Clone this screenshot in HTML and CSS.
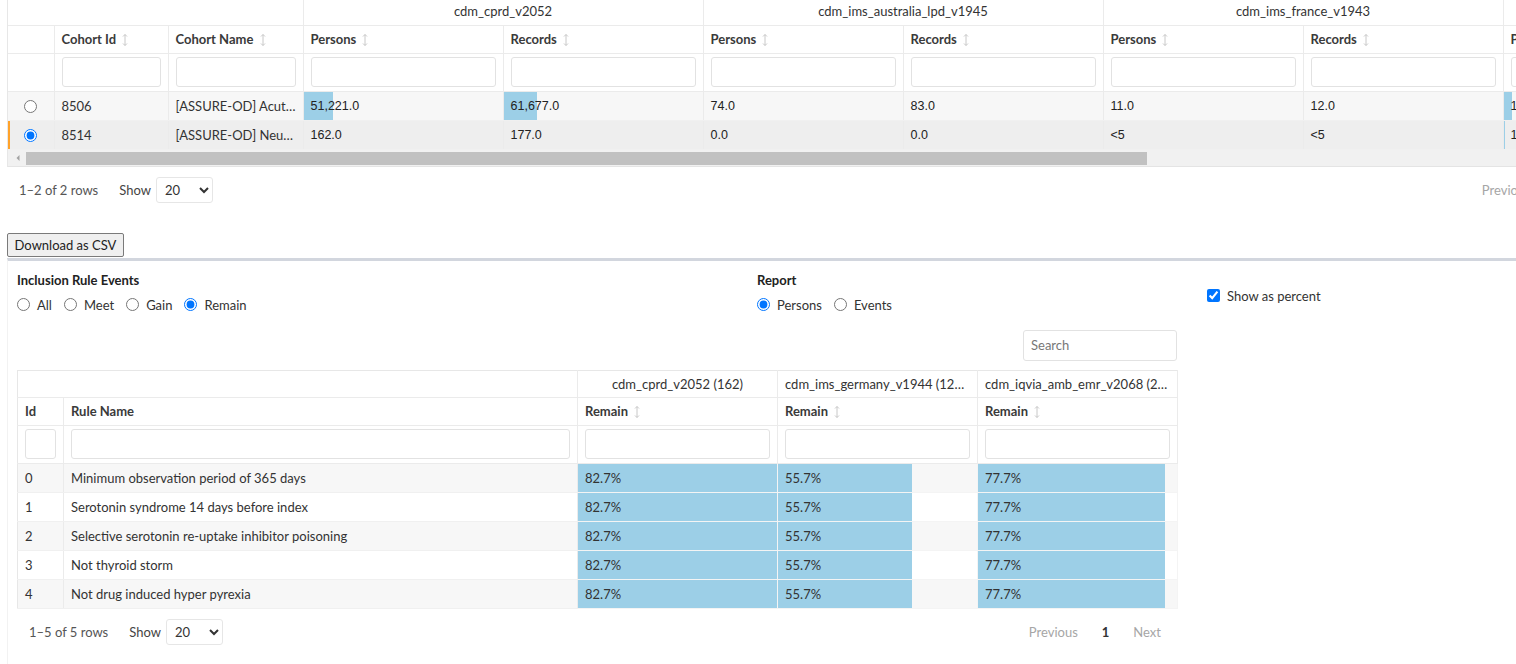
FILE: index.html
```html
<!DOCTYPE html>
<html>
<head>
<meta charset="utf-8">
<link rel="stylesheet" href="styles.css">
</head>
<body>
<div class="page">
  <div class="grid-wrap">
    <div class="grid-box">
      <div class="grid-scroll">
        <table class="grid top">
          <colgroup>
            <col class="c-sel"><col class="c-id"><col class="c-name">
            <col class="c-num"><col class="c-num"><col class="c-num"><col class="c-num">
            <col class="c-num"><col class="c-num"><col class="c-num"><col class="c-num">
          </colgroup>
          <thead>
            <tr class="grp">
              <th colspan="3"></th>
              <th colspan="2">cdm_cprd_v2052</th>
              <th colspan="2">cdm_ims_australia_lpd_v1945</th>
              <th colspan="2">cdm_ims_france_v1943</th>
              <th colspan="2">cdm_ims_germany_v1944</th>
            </tr>
            <tr class="hdr">
              <th></th>
              <th>Cohort Id <svg class="sort" viewBox="0 0 8 14" width="8" height="14"><path d="M4 1.5v11M2 3.5L4 1.5L6 3.5M2 10.5L4 12.5L6 10.5"/></svg></th>
              <th>Cohort Name <svg class="sort" viewBox="0 0 8 14" width="8" height="14"><path d="M4 1.5v11M2 3.5L4 1.5L6 3.5M2 10.5L4 12.5L6 10.5"/></svg></th>
              <th>Persons <svg class="sort" viewBox="0 0 8 14" width="8" height="14"><path d="M4 1.5v11M2 3.5L4 1.5L6 3.5M2 10.5L4 12.5L6 10.5"/></svg></th>
              <th>Records <svg class="sort" viewBox="0 0 8 14" width="8" height="14"><path d="M4 1.5v11M2 3.5L4 1.5L6 3.5M2 10.5L4 12.5L6 10.5"/></svg></th>
              <th>Persons <svg class="sort" viewBox="0 0 8 14" width="8" height="14"><path d="M4 1.5v11M2 3.5L4 1.5L6 3.5M2 10.5L4 12.5L6 10.5"/></svg></th>
              <th>Records <svg class="sort" viewBox="0 0 8 14" width="8" height="14"><path d="M4 1.5v11M2 3.5L4 1.5L6 3.5M2 10.5L4 12.5L6 10.5"/></svg></th>
              <th>Persons <svg class="sort" viewBox="0 0 8 14" width="8" height="14"><path d="M4 1.5v11M2 3.5L4 1.5L6 3.5M2 10.5L4 12.5L6 10.5"/></svg></th>
              <th>Records <svg class="sort" viewBox="0 0 8 14" width="8" height="14"><path d="M4 1.5v11M2 3.5L4 1.5L6 3.5M2 10.5L4 12.5L6 10.5"/></svg></th>
              <th>Persons <svg class="sort" viewBox="0 0 8 14" width="8" height="14"><path d="M4 1.5v11M2 3.5L4 1.5L6 3.5M2 10.5L4 12.5L6 10.5"/></svg></th>
              <th>Records <svg class="sort" viewBox="0 0 8 14" width="8" height="14"><path d="M4 1.5v11M2 3.5L4 1.5L6 3.5M2 10.5L4 12.5L6 10.5"/></svg></th>
            </tr>
            <tr class="flt">
              <td></td>
              <td><input type="text"></td><td><input type="text"></td>
              <td><input type="text"></td><td><input type="text"></td>
              <td><input type="text"></td><td><input type="text"></td>
              <td><input type="text"></td><td><input type="text"></td>
              <td><input type="text"></td><td><input type="text"></td>
            </tr>
          </thead>
          <tbody>
            <tr class="odd">
              <td class="sel"><input type="radio" name="cohort"></td>
              <td>8506</td>
              <td>[ASSURE-OD] Acute serotonin syndrome</td>
              <td class="num bar" style="--w:14.5%">51,221.0</td>
              <td class="num bar" style="--w:16.5%">61,677.0</td>
              <td class="num">74.0</td>
              <td class="num">83.0</td>
              <td class="num">11.0</td>
              <td class="num">12.0</td>
              <td class="num bar" style="--w:4%">1,437.0</td>
              <td class="num bar" style="--w:4%">1,612.0</td>
            </tr>
            <tr class="picked">
              <td class="sel"><input type="radio" name="cohort" checked></td>
              <td>8514</td>
              <td>[ASSURE-OD] Neuroleptic malignant syndrome</td>
              <td class="num">162.0</td>
              <td class="num">177.0</td>
              <td class="num">0.0</td>
              <td class="num">0.0</td>
              <td class="num">&lt;5</td>
              <td class="num">&lt;5</td>
              <td class="num bar" style="--w:1px">117.0</td>
              <td class="num bar" style="--w:1px">131.0</td>
            </tr>
          </tbody>
        </table>
      </div>
      <div class="hscroll">
        <svg class="hs-arrow" viewBox="0 0 6 8" width="6" height="8"><path d="M4.5 1L1.5 4L4.5 7z"/></svg>
        <div class="hs-thumb"></div>
      </div>
    </div>
    <div class="pager">
      <div class="pager-info">
        <span class="rows">1–2 of 2 rows</span>
        <span class="show">Show</span>
        <select class="size"><option>20</option></select>
      </div>
      <div class="pager-nav">
        <span class="nav-off">Previous</span>
        <span class="nav-cur">1</span>
        <span class="nav-off">Next</span>
      </div>
    </div>
  </div>

  <button class="csv" type="button">Download as CSV</button>

  <div class="box">
    <div class="controls">
      <div class="ctl">
        <div class="ctl-title">Inclusion Rule Events</div>
        <div class="radios">
          <label><input type="radio" name="ev">All</label>
          <label><input type="radio" name="ev">Meet</label>
          <label><input type="radio" name="ev">Gain</label>
          <label><input type="radio" name="ev" checked>Remain</label>
        </div>
      </div>
      <div class="ctl">
        <div class="ctl-title">Report</div>
        <div class="radios">
          <label><input type="radio" name="rep" checked>Persons</label>
          <label><input type="radio" name="rep">Events</label>
        </div>
      </div>
      <div class="ctl ctl-check">
        <label><input type="checkbox" checked>Show as percent</label>
      </div>
    </div>

    <div class="rules">
      <div class="search-row">
        <input class="search" type="text" placeholder="Search">
      </div>
      <table class="grid bottom">
        <colgroup>
          <col class="b-id"><col class="b-name"><col class="b-num"><col class="b-num"><col class="b-num">
        </colgroup>
        <thead>
          <tr class="grp">
            <th colspan="2"></th>
            <th>cdm_cprd_v2052 (162)</th>
            <th class="lft">cdm_ims_germany_v1944 (1203)</th>
            <th class="lft">cdm_iqvia_amb_emr_v2068 (2384)</th>
          </tr>
          <tr class="hdr">
            <th>Id</th>
            <th>Rule Name</th>
            <th>Remain <svg class="sort" viewBox="0 0 8 14" width="8" height="14"><path d="M4 1.5v11M2 3.5L4 1.5L6 3.5M2 10.5L4 12.5L6 10.5"/></svg></th>
            <th>Remain <svg class="sort" viewBox="0 0 8 14" width="8" height="14"><path d="M4 1.5v11M2 3.5L4 1.5L6 3.5M2 10.5L4 12.5L6 10.5"/></svg></th>
            <th>Remain <svg class="sort" viewBox="0 0 8 14" width="8" height="14"><path d="M4 1.5v11M2 3.5L4 1.5L6 3.5M2 10.5L4 12.5L6 10.5"/></svg></th>
          </tr>
          <tr class="flt">
            <td><input type="text"></td><td><input type="text"></td>
            <td><input type="text"></td><td><input type="text"></td><td><input type="text"></td>
          </tr>
        </thead>
        <tbody>
          <tr class="odd">
            <td>0</td><td>Minimum observation period of 365 days</td>
            <td class="bar" style="--w:100%">82.7%</td><td class="bar" style="--w:67.4%">55.7%</td><td class="bar" style="--w:94%">77.7%</td>
          </tr>
          <tr>
            <td>1</td><td>Serotonin syndrome 14 days before index</td>
            <td class="bar" style="--w:100%">82.7%</td><td class="bar" style="--w:67.4%">55.7%</td><td class="bar" style="--w:94%">77.7%</td>
          </tr>
          <tr class="odd">
            <td>2</td><td>Selective serotonin re-uptake inhibitor poisoning</td>
            <td class="bar" style="--w:100%">82.7%</td><td class="bar" style="--w:67.4%">55.7%</td><td class="bar" style="--w:94%">77.7%</td>
          </tr>
          <tr>
            <td>3</td><td>Not thyroid storm</td>
            <td class="bar" style="--w:100%">82.7%</td><td class="bar" style="--w:67.4%">55.7%</td><td class="bar" style="--w:94%">77.7%</td>
          </tr>
          <tr class="odd">
            <td>4</td><td>Not drug induced hyper pyrexia</td>
            <td class="bar" style="--w:100%">82.7%</td><td class="bar" style="--w:67.4%">55.7%</td><td class="bar" style="--w:94%">77.7%</td>
          </tr>
        </tbody>
      </table>
      <div class="pager">
        <div class="pager-info">
          <span class="rows">1–5 of 5 rows</span>
          <span class="show">Show</span>
          <select class="size"><option>20</option></select>
        </div>
        <div class="pager-nav">
          <span class="nav-off">Previous</span>
          <span class="nav-cur">1</span>
          <span class="nav-off">Next</span>
        </div>
      </div>
    </div>
  </div>
</div>
</body>
</html>
```

FILE: styles.css
```css
* { box-sizing: border-box; }
html, body { margin: 0; padding: 0; background: #fff; }
body {
  font-family: Lato, "Noto Sans", sans-serif;
  font-size: 13px;
  color: #333;
  overflow: hidden;
}
.page {
  width: 1660px;
  padding-left: 7px;
  margin-top: -2px;
}

/* ---------- grids ---------- */
.grid-wrap { width: 1623px; }
.grid-box {
  border-left: 1px solid #e7e7e7;
  border-bottom: 1px solid #e4e4e4;
}
.grid-scroll { overflow: hidden; }
.grid {
  border-collapse: collapse;
  table-layout: fixed;
}
.grid.top { width: 1895px; }
.c-sel { width: 46px; }
.c-id { width: 114px; }
.c-name { width: 135px; }
.c-num { width: 200px; }

.grid th, .grid td {
  padding: 0 7px;
  border-right: 1px solid #ebebeb;
  border-bottom: 1px solid #ebebeb;
  white-space: nowrap;
  overflow: hidden;
  text-overflow: ellipsis;
  text-align: left;
}
.grid .grp th {
  height: 27px;
  font-weight: 400;
  text-align: center;
  color: #333;
}
.grid .grp th.lft { text-align: left; padding-right: 9px; }
.grid .hdr th {
  height: 28px;
  font-weight: 700;
  color: #3a3a3a;
}
.sort {
  vertical-align: -3px;
  margin-left: 2px;
  fill: none;
  stroke: #c8c8c8;
  stroke-width: 1;
}
.grid .flt td { height: 38px; }
.grid .flt input {
  display: block;
  width: 100%;
  height: 30px;
  border: 1px solid #e2e2e2;
  border-radius: 3px;
  background: #fff;
  outline: none;
}
.grid tbody td {
  height: 29px;
  border-bottom: 1px solid #f0f0f0;
  color: #333;
}
.grid tbody tr.odd { background: #f7f7f7; }
.grid tbody tr.picked { background: #eeeeee; }
.grid td.sel { text-align: center; padding: 0; }
.grid td.sel input { margin: 0; vertical-align: -2px; width: 13px; height: 13px; }
.grid tr.picked td.sel { box-shadow: inset 2px 0 0 #ffa22a; }
.grid td.num {
  font-family: "Liberation Sans", Arial, sans-serif;
  font-size: 12.5px;
  color: #222;
}
.grid td.bar {
  background-image: linear-gradient(90deg, #9ccfe7 var(--w), transparent var(--w));
  background-clip: padding-box;
}
.grid.bottom td.bar { border-bottom-color: #f4f4f4; border-right-color: #f4f4f4; }

/* scrollbar */
.hscroll {
  height: 16px;
  background: #f1f1f1;
  display: flex;
  align-items: center;
  padding-left: 7px;
  border-top: 1px solid #f1f1f1;
}
.hs-arrow { fill: #a3a3a3; }
.hs-thumb {
  margin-left: 5px;
  width: 1121px;
  height: 13px;
  background: #c1c1c1;
  align-self: flex-end;
  margin-bottom: 1px;
}

/* pager */
.pager {
  display: flex;
  justify-content: space-between;
  align-items: center;
  padding: 10px 16px 10px 12px;
}
.pager-info { display: flex; align-items: center; }
.rows { color: #555; margin-right: 21px; }
.show { color: #444; margin-right: 5px; }
.size {
  width: 57px;
  height: 26px;
  border: 1px solid #e6e6e6;
  border-radius: 3px;
  background: #fff;
  font-family: Lato, sans-serif;
  font-size: 13px;
  color: #333;
  padding-left: 4px;
}
.pager-nav { display: flex; align-items: center; gap: 24px; }
.nav-off { color: #a6a6a6; }
.nav-cur { font-weight: 700; color: #333; }

/* csv button */
.csv {
  display: block;
  margin-top: 20px;
  height: 24px;
  width: 117px;
  padding: 0;
  background: #efefef;
  border: 1px solid #7a7a7a;
  border-radius: 2px;
  font-family: Lato, sans-serif;
  font-size: 13px;
  color: #222;
}

/* lower box */
.box {
  margin-top: 1px;
  border-top: 3px solid #d2d6de;
  border-left: 1px solid #f2f2f2;
  padding: 10px 10px 20px 9px;
}
.controls {
  display: grid;
  grid-template-columns: 740px 450px auto;
}
.ctl-title {
  font-weight: 700;
  line-height: 20px;
  margin-top: -1px;
  margin-bottom: 5px;
  color: #222;
}
.radios { display: flex; align-items: center; height: 20px; }
.radios label, .ctl-check label {
  display: inline-flex;
  align-items: center;
  gap: 7px;
  margin-right: 12px;
  color: #333;
}
.radios input, .ctl-check input { margin: 0; width: 13px; height: 13px; }
.ctl-check { padding-top: 17px; }

.rules { width: 1160px; }
.search-row {
  display: flex;
  justify-content: flex-end;
  margin-top: 15px;
  margin-bottom: 9px;
}
.search {
  width: 154px;
  height: 31px;
  border: 1px solid #e2e2e2;
  border-radius: 3px;
  padding: 0 7px;
  font-family: Lato, sans-serif;
  font-size: 13px;
  outline: none;
}
.search::placeholder { color: #777; }
.grid.bottom {
  width: 1160px;
  border: 1px solid #e7e7e7;
}
.b-id { width: 46px; }
.b-name { width: 514px; }
.b-num { width: 200px; }
```
